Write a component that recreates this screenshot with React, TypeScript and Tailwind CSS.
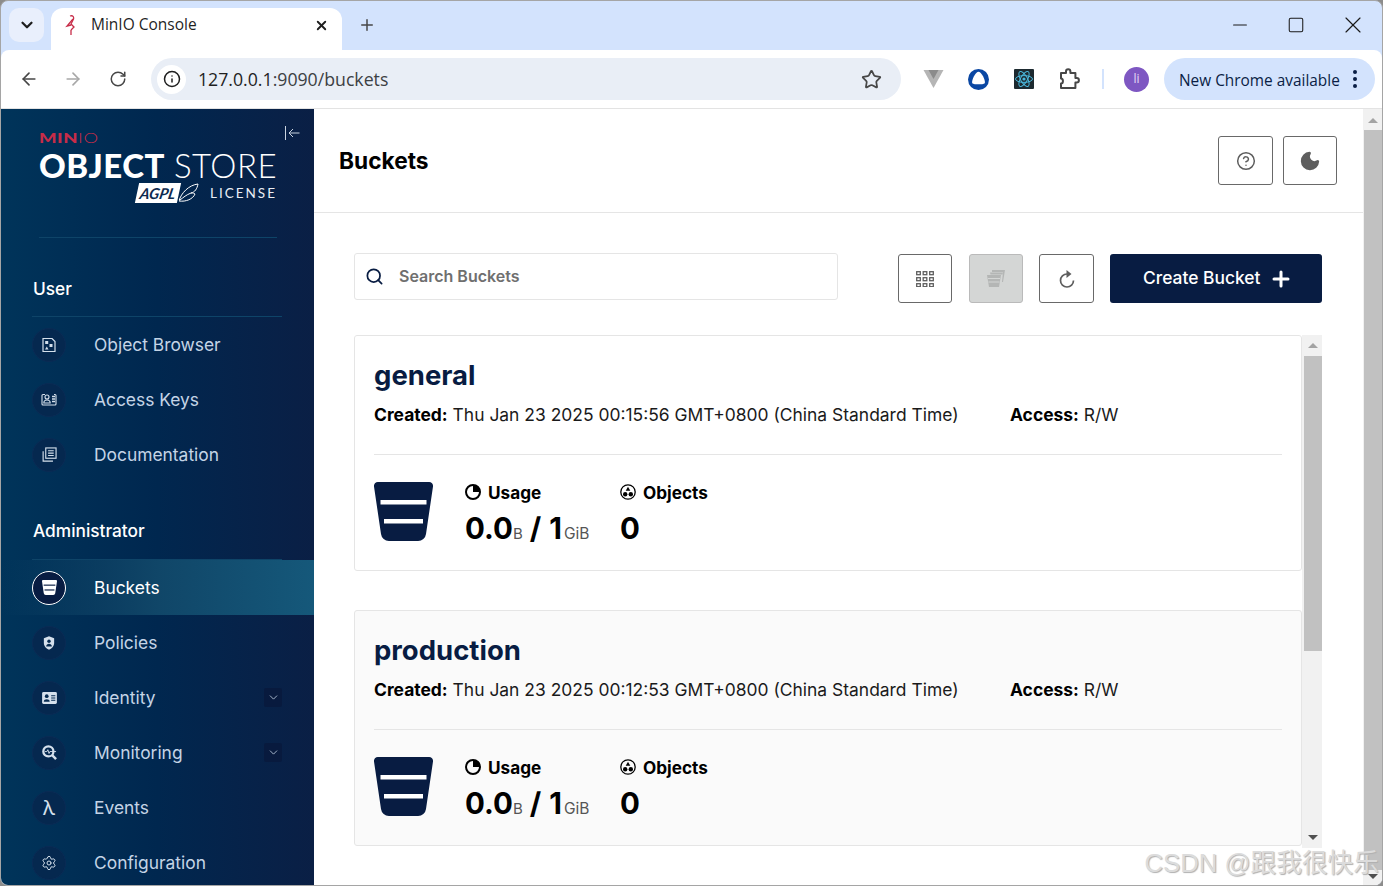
import type { ReactNode } from "react";
import {
  ArrowLeft,
  ArrowRight,
  ChevronDown,
  CircleHelp,
  Info,
  Minus,
  Moon,
  Plus,
  RotateCw,
  Search,
  Settings,
  Square,
  Star,
  X,
} from "lucide-react";

// small drawings that the icon packs don't have
function BucketIcon({ className, fill = "#081c42", line = "#fff" }: { className?: string; fill?: string; line?: string }) {
  return (
    <svg viewBox="0 0 59 59" className={className}>
      <path d="M4 0h51a4 4 0 0 1 4 4.500L52 52a8 8 0 0 1-8 7H15a8 8 0 0 1-8-7L0 4.500A4 4 0 0 1 4 0Z" fill={fill} />
      <rect x="6.500" y="18" width="46" height="4.500" fill={line} />
      <rect x="10" y="37" width="39" height="4.500" fill={line} />
    </svg>
  );
}

function PieIcon() {
  return (
    <svg viewBox="0 0 16 16" className="w-4 h-4 -mt-[3px]">
      <circle cx="8" cy="8" r="7" fill="none" stroke="#000" strokeWidth="2" />
      <path d="M8 8V1a7 7 0 0 1 7 7Z" fill="#000" />
    </svg>
  );
}

function ObjectsIcon() {
  return (
    <svg viewBox="0 0 16 16" className="w-4 h-4 -mt-[3px]">
      <circle cx="8" cy="8" r="7.200" fill="none" stroke="#000" strokeWidth="1.300" />
      <path d="M8 2.800 10.300 6.800H5.700Z" fill="#000" />
      <circle cx="5.200" cy="10.200" r="2.200" fill="#000" />
      <circle cx="10.800" cy="10.200" r="2.200" fill="#000" />
    </svg>
  );
}

function BrowserIcon() {
  return (
    <svg viewBox="0 0 14 14" className="w-[14px] h-[14px]" fill="#d5e0ec">
      <path d="M1 .5h9l3 3v10H1Z" fill="none" stroke="#d5e0ec" strokeWidth="1.200" />
      <rect x="3.200" y="3" width="3" height="3" />
      <rect x="7.500" y="6" width="3" height="3" />
      <path d="M3 11.500 4.800 8.500 6.500 11.500Z" />
    </svg>
  );
}

function KeysIcon() {
  return (
    <svg viewBox="0 0 16 14" className="w-[16px] h-[14px]" fill="none" stroke="#d5e0ec" strokeWidth="1.100">
      <path d="M4 1.500H2a1 1 0 0 0-1 1V11a1 1 0 0 0 1 1h12a1 1 0 0 0 1-1V2.500a1 1 0 0 0-1-1h-1" />
      <circle cx="6" cy="4" r="2" />
      <path d="M2.800 10c0-4 6.400-4 6.400 0Z" />
      <path d="M11 3.500h3M11 6h3M11 8.500h3" strokeWidth="1.500" />
    </svg>
  );
}

function DocsIcon() {
  return (
    <svg viewBox="0 0 16 16" className="w-[15px] h-[15px]" fill="none" stroke="#d5e0ec" strokeWidth="1.200">
      <rect x="4" y="1" width="11" height="11" />
      <path d="M6.500 4h6M6.500 6.500h6M6.500 9h6" />
      <path d="M1.200 4.500V15h10.500" />
    </svg>
  );
}

function PolicyIcon() {
  return (
    <svg viewBox="0 0 14 16" className="w-[12px] h-[14px]">
      <path d="M7 0 13 2.500V8c0 4-3 6.500-6 8-3-1.500-6-4-6-8V2.500Z" fill="#d5e0ec" />
      <circle cx="7" cy="6" r="2" fill="#05294f" />
      <path d="M3.700 12c0-4 6.600-4 6.600 0Z" fill="#05294f" />
    </svg>
  );
}

function IdentityIcon() {
  return (
    <svg viewBox="0 0 16 13" className="w-[15px] h-[12px]">
      <rect width="16" height="13" rx="1.500" fill="#d5e0ec" />
      <circle cx="5" cy="4.500" r="2" fill="#05294f" />
      <path d="M1.800 10.500c0-3.500 6.400-3.500 6.400 0Z" fill="#05294f" />
      <path d="M9.800 4h4.500M9.800 6.500h4.500M9.800 9h4.500" stroke="#05294f" strokeWidth="1.200" />
    </svg>
  );
}

function MonitorIcon() {
  return (
    <svg viewBox="0 0 16 16" className="w-[15px] h-[15px]" fill="none">
      <circle cx="6.800" cy="6.800" r="5.400" stroke="#d5e0ec" strokeWidth="2.400" />
      <path d="M3 7h2.200l1-2 1.300 4 .9-2H15" stroke="#d5e0ec" strokeWidth="1" />
      <path d="M10.800 10.800 15 15" stroke="#d5e0ec" strokeWidth="2.600" />
    </svg>
  );
}

function CollapseIcon() {
  return (
    <svg viewBox="0 0 15 14" className="w-[15px] h-[14px]" fill="none" stroke="#c9d3df" strokeWidth="1">
      <path d="M.5 0v14" />
      <path d="M14.500 7H4M8 3 4 7l4 4" />
    </svg>
  );
}

function GridIcon() {
  return (
    <svg viewBox="0 0 18 16" className="w-[18px] h-[16px]" fill="none" stroke="#5e5e5e" strokeWidth="1.300">
      {[0, 6, 12].map((y) =>
        [0, 6.500, 13].map((x) => <rect key={`${x}-${y}`} x={x + 0.7} y={y + 0.7} width="3.600" height="3" />)
      )}
    </svg>
  );
}

function MultiBucketIcon() {
  return (
    <svg viewBox="0 0 18 17" className="w-[18px] h-[17px]" fill="#b4b6b5">
      <path d="M5 0h13l-2 12h-1l1-10H5Z" />
      <path d="M3 2.500h13l-.5 2H3.500Z" />
      <path d="M0 5h14l-2 12H2Z" />
      <path d="M1 8.500h12M1.500 12h11" stroke="#d4d6d5" strokeWidth="1.200" />
    </svg>
  );
}

function RefreshIcon() {
  return (
    <svg viewBox="0 0 20 20" className="w-[20px] h-[20px]" fill="none" stroke="#5e5e5e" strokeWidth="1.700">
      <path d="M10 5a6.500 6.500 0 1 0 6.500 6.500" />
      <path d="M9.500 1 14.500 5 9.500 9Z" fill="#5e5e5e" stroke="none" />
    </svg>
  );
}

function ExtensionIcon() {
  return (
    <svg viewBox="0 0 22 22" className="w-[22px] h-[22px]" fill="none" stroke="#474747" strokeWidth="2" strokeLinejoin="round">
      <path d="M3 5h5V3.500a2.200 2.200 0 0 1 4.400 0V5h5v5h1.300a2.200 2.200 0 0 1 0 4.400h-1.300V20H3v-4.500c2.600 0 2.600-5 0-5Z" />
    </svg>
  );
}

function Flamingo() {
  return (
    <svg viewBox="0 0 12 20" className="w-[12px] h-[20px]" fill="none" stroke="#c72c48" strokeWidth="1.300">
      <path d="M5 1c3-1 4 1 3.500 3L6 9l3 3-3 3" />
      <path d="M8 4 2 11l4-1M6 15v5" />
    </svg>
  );
}

function NavRow({ icon, label, active, chevron }: { icon: ReactNode; label: string; active?: boolean; chevron?: boolean }) {
  return (
    <div
      className={`flex items-center h-[55px] pl-[31px] pr-[32px] ${
        active ? "bg-linear-to-r from-transparent via-[#104668] to-[#15587a] text-white" : "text-[#c4d4e6]"
      }`}
    >
      <div
        className={`flex items-center justify-center w-[34px] h-[34px] rounded-full border ${
          active ? "bg-[#081c42] border-white" : "bg-[#05284f] border-[#0a2b55]"
        }`}
      >
        {icon}
      </div>
      <span className="ml-[28px] flex-1 text-[17.400px] leading-6">{label}</span>
      {chevron && (
        <div className="flex items-center justify-center w-[18px] h-[19px] rounded-[2px] bg-[#081a3e]">
          <ChevronDown className="w-[13px] h-[13px] text-[#c4d4e6]" strokeWidth={1.500} />
        </div>
      )}
    </div>
  );
}

function SectionTitle({ label, className }: { label: string; className: string }) {
  return (
    <div className={`ml-[31px] mr-[32px] pl-px border-b border-[#0e4468] text-[17.300px] leading-6 font-medium text-white ${className}`}>
      {label}
    </div>
  );
}

function OutlineButton({ children, className }: { children: ReactNode; className: string }) {
  return (
    <div className={`flex items-center justify-center h-[49px] rounded-[3px] border border-[#696969] bg-white ${className}`}>
      {children}
    </div>
  );
}

function BucketCard({ name, created, className }: { name: string; created: string; className?: string }) {
  return (
    <div className={`h-[236px] shrink-0 rounded-[3px] border border-[#e5e5e5] px-[19px] pt-[21px] ${className ?? ""}`}>
      <div className="text-[27.500px] leading-[36px] font-bold text-[#081c42]">{name}</div>
      <div className="flex mt-[10px] text-[17.450px] leading-6 text-[#1a1a1a]">
        <span className="w-[636px]">
          <b className="font-bold text-black">Created:</b> {created}
        </span>
        <span>
          <b className="font-bold text-black">Access:</b> R/W
        </span>
      </div>
      <div className="mt-[27px] border-t border-[#e5e5e5]" />
      <div className="flex mt-[27px]">
        <BucketIcon className="w-[59px] h-[59px]" />
        <div className="ml-[32px] w-[155px]">
          <div className="flex items-center gap-[7px] h-[22px] text-[17.200px] font-bold text-black">
            <PieIcon />
            Usage
          </div>
          <div className="mt-[4px] h-[40px] leading-[40px] whitespace-nowrap text-[29.500px] font-bold text-black">
            0.0<span className="text-[15px] font-normal text-[#555]">B</span> / <span className="ml-px">1</span>
            <span className="ml-[2px] text-[15.500px] font-normal text-[#555]">GiB</span>
          </div>
        </div>
        <div>
          <div className="flex items-center gap-[7px] h-[22px] text-[17.200px] font-bold text-black">
            <ObjectsIcon />
            Objects
          </div>
          <div className="mt-[4px] h-[40px] leading-[40px] text-[29.500px] font-bold text-black">0</div>
        </div>
      </div>
    </div>
  );
}

function ArrowUp({ className }: { className?: string }) {
  return <div className={`w-0 h-0 border-x-[5px] border-x-transparent border-b-[5px] border-b-[#a3a3a3] ${className ?? ""}`} />;
}

function ArrowDown({ className }: { className?: string }) {
  return <div className={`w-0 h-0 border-x-[5px] border-x-transparent border-t-[5px] border-t-[#505050] ${className ?? ""}`} />;
}

export default function App() {
  return (
    <div className="relative w-[1383px] h-[886px] overflow-hidden bg-[#8c8c8c] font-['Inter',sans-serif]">
      <div className="flex flex-col w-full h-full overflow-hidden rounded-[8px] border border-[#a5a5a5] bg-[#d3e3fd]">
        {/* tab strip */}
        <div className="flex items-start h-[49px] shrink-0 pt-[7px] pl-[8px] font-['Open_Sans',sans-serif]">
          <div className="flex items-center justify-center w-[35px] h-[34px] rounded-[10px] bg-[#e9effc]">
            <ChevronDown className="w-[18px] h-[18px] text-[#1f1f1f]" strokeWidth={3} />
          </div>
          <div className="flex items-center ml-[7px] w-[291px] h-[42px] rounded-t-[12px] bg-white pl-[14px] pr-[13px] pb-[8px]">
            <Flamingo />
            <span className="ml-[14px] flex-1 text-[15.500px] text-[#1f1f1f]">MinIO Console</span>
            <X className="w-[15px] h-[15px] text-[#1f1f1f]" strokeWidth={3} />
          </div>
          <Plus className="ml-[16px] mt-[8px] w-[18px] h-[18px] text-[#474747]" strokeWidth={2} />
          <div className="flex-1" />
          <div className="flex items-center h-[34px]">
            <Minus className="w-[22px] h-[22px] text-[#1a1a1a]" strokeWidth={1.100} />
            <Square className="ml-[36px] w-[18px] h-[18px] text-[#1a1a1a]" strokeWidth={1.400} />
            <X className="ml-[34px] mr-[15px] w-[28px] h-[28px] text-[#1a1a1a]" strokeWidth={1} />
          </div>
        </div>

        {/* address bar */}
        <div className="flex items-center h-[59px] shrink-0 pl-[6px] bg-white rounded-t-[8px] border-b border-[#e3e3e3] font-['Open_Sans',sans-serif]">
          <div className="flex items-center justify-center w-[44px]">
            <ArrowLeft className="w-[20px] h-[20px] text-[#474747]" strokeWidth={2} />
          </div>
          <div className="flex items-center justify-center w-[44px]">
            <ArrowRight className="w-[20px] h-[20px] text-[#a8a8a8]" strokeWidth={2} />
          </div>
          <div className="flex items-center justify-center w-[46px]">
            <RotateCw className="w-[18px] h-[18px] text-[#474747]" strokeWidth={2} />
          </div>
          <div className="flex items-center ml-[10px] w-[750px] h-[42px] rounded-full bg-[#e9eef6] pl-[6px] pr-[19px]">
            <div className="flex items-center justify-center w-[29px] h-[29px] rounded-full bg-white">
              <Info className="w-[18px] h-[18px] text-[#1f1f1f]" strokeWidth={2} />
            </div>
            <span className="ml-[12px] flex-1 text-[17.700px] text-[#3c4043]">
              <span className="text-[#1f1f1f]">127.0.0.1</span>:9090/buckets
            </span>
            <Star className="w-[21px] h-[21px] text-[#474747]" strokeWidth={2} />
          </div>
          <div className="flex items-center justify-center ml-[10px] w-[45px]">
            <svg viewBox="0 0 20 18" className="w-[21px] h-[18px]">
              <path d="M0 0h20L10 18Z" fill="#b5b5b5" />
              <path d="M5 0h10l-5 9Z" fill="#8b8b8b" />
            </svg>
          </div>
          <div className="flex items-center justify-center w-[45px]">
            <svg viewBox="0 0 20 20" className="w-[21px] h-[21px]">
              <circle cx="10" cy="10" r="10" fill="#0a47a3" />
              <path d="M10 2.500c2.500 0 7 8 6 11-2 1.500-10 1.500-12 0-1-3 3.500-11 6-11Z" fill="#fff" />
            </svg>
          </div>
          <div className="flex items-center justify-center w-[45px]">
            <svg viewBox="0 0 20 20" className="w-[20px] h-[20px]" fill="none" stroke="#4bb8dc" strokeWidth="1">
              <rect width="20" height="20" rx="1" fill="#1d2a30" stroke="none" />
              <ellipse cx="10" cy="10" rx="8.500" ry="3.400" />
              <ellipse cx="10" cy="10" rx="8.500" ry="3.400" transform="rotate(60 10 10)" />
              <ellipse cx="10" cy="10" rx="8.500" ry="3.400" transform="rotate(120 10 10)" />
              <circle cx="10" cy="10" r="1.600" fill="#4bb8dc" stroke="none" />
            </svg>
          </div>
          <div className="flex items-center justify-center w-[45px]">
            <ExtensionIcon />
          </div>
          <div className="ml-[11px] w-[2px] h-[20px] bg-[#d3e3fd]" />
          <div className="flex items-center justify-center ml-[20px] w-[25px] h-[25px] rounded-full bg-[#7e57c2] text-[12px] text-[#e6dcf5]">
            li
          </div>
          <div className="flex items-center ml-[15px] w-[211px] h-[42px] rounded-full bg-[#d3e3fd] pl-[15px]">
            <span className="pt-[3px] text-[15.400px] text-[#0a1e45]">New Chrome available</span>
            <div className="ml-[13px] flex flex-col gap-[3px]">
              <div className="w-[4px] h-[4px] rounded-full bg-[#0a1e45]" />
              <div className="w-[4px] h-[4px] rounded-full bg-[#0a1e45]" />
              <div className="w-[4px] h-[4px] rounded-full bg-[#0a1e45]" />
            </div>
          </div>
        </div>

        {/* page */}
        <div className="flex flex-1 min-h-0 bg-white">
          <aside className="w-[313px] shrink-0 overflow-hidden bg-linear-to-r from-[#00345a] via-[#00274f] to-[#0a1f45]">
            <div className="flex h-[129px] pt-[17px] pl-[38px]">
              <div className="w-[238px] h-[112px] pt-[5px] border-b border-[#0e4468] whitespace-nowrap font-['Lato',sans-serif]">
                <div className="h-[12px] text-[14px] leading-[14px] tracking-[0.4px] text-[#c72c48] font-black [transform-origin:left] scale-x-[1.320]">
                  MIN<span className="font-light">IO</span>
                </div>
                <div className="mt-[5px] h-[34px] text-[33px] leading-[34px] tracking-[0.500px] text-white">
                  <span className="font-black">OBJECT</span> <span className="font-light">STORE</span>
                </div>
                <div className="flex items-center justify-end h-[22px]">
                  <div className="flex items-center justify-center w-[42px] h-[20px] -skew-x-12 bg-white text-[15px] leading-[15px] italic font-bold text-[#0d2a4f]">
                    AGPL
                  </div>
                  <svg viewBox="0 0 20 20" className="w-[20px] h-[20px]" fill="none" stroke="#fff" strokeWidth="1">
                    <path d="M0 18C2 10 10 2 19 1c-1 5-3 8-7 9 2 0 3 0 4 1-2 5-9 8-16 7Z" />
                    <path d="M1 17c4-3 6-5 11-7" />
                  </svg>
                  <span className="ml-[11px] text-[13.500px] tracking-[2px] text-[#e9eef4]">LICENSE</span>
                </div>
              </div>
              <div className="ml-[8px]">
                <CollapseIcon />
              </div>
            </div>

            <SectionTitle label="User" className="pt-[39px] pb-[15px]" />
            <NavRow icon={<BrowserIcon />} label="Object Browser" />
            <NavRow icon={<KeysIcon />} label="Access Keys" />
            <NavRow icon={<DocsIcon />} label="Documentation" />

            <SectionTitle label="Administrator" className="mt-[37px] pb-[16px]" />
            <NavRow icon={<BucketIcon className="w-[15px] h-[15px]" fill="#fff" line="#081c42" />} label="Buckets" active />
            <NavRow icon={<PolicyIcon />} label="Policies" />
            <NavRow icon={<IdentityIcon />} label="Identity" chevron />
            <NavRow icon={<MonitorIcon />} label="Monitoring" chevron />
            <NavRow icon={<span className="text-[20px] leading-none text-[#d5e0ec]">λ</span>} label="Events" />
            <NavRow icon={<Settings className="w-[16px] h-[16px] text-[#d5e0ec]" strokeWidth={1.500} />} label="Configuration" />
          </aside>

          <main className="flex-1 min-w-0">
            <header className="flex items-center h-[104px] border-b border-[#e5e5e5] pl-[25px] pr-[26px]">
              <h1 className="flex-1 pt-[2px] text-[22.700px] font-bold text-black">Buckets</h1>
              <OutlineButton className="w-[55px]">
                <CircleHelp className="w-[20px] h-[20px] text-[#5e5e5e]" strokeWidth={1.800} />
              </OutlineButton>
              <OutlineButton className="ml-[10px] w-[54px]">
                <Moon className="w-[22px] h-[22px] text-[#5e5e5e] fill-[#5e5e5e]" />
              </OutlineButton>
            </header>

            <div className="pt-[40px] pl-[40px] pr-[41px]">
              <div className="flex items-start">
                <div className="flex items-center w-[484px] h-[47px] rounded-[3px] border border-[#e5e5e5] pl-[10px]">
                  <Search className="w-[19px] h-[19px] text-[#081c42]" strokeWidth={2.200} />
                  <span className="ml-[15px] pb-[2px] text-[16px] font-semibold text-[#6f6f6f]">Search Buckets</span>
                </div>
                <OutlineButton className="ml-[60px] mt-px w-[54px]">
                  <GridIcon />
                </OutlineButton>
                <div className="flex items-center justify-center ml-[17px] mt-px w-[54px] h-[49px] rounded-[3px] border border-[#bababa] bg-[#d4d6d5]">
                  <MultiBucketIcon />
                </div>
                <OutlineButton className="ml-[16px] mt-px w-[55px]">
                  <RefreshIcon />
                </OutlineButton>
                <div className="flex items-center gap-[9px] ml-[16px] mt-px pl-[33px] w-[212px] h-[49px] rounded-[3px] bg-[#081c42] text-[17.400px] font-medium text-white">
                  Create Bucket
                  <Plus className="w-[24px] h-[24px]" strokeWidth={3} />
                </div>
              </div>

              <div className="flex mt-[32px] h-[513px]">
                <div className="flex flex-col gap-[39px] w-[948px] overflow-hidden">
                  <BucketCard name="general" created="Thu Jan 23 2025 00:15:56 GMT+0800 (China Standard Time)" />
                  <BucketCard
                    name="production"
                    created="Thu Jan 23 2025 00:12:53 GMT+0800 (China Standard Time)"
                    className="bg-[#fafafa]"
                  />
                </div>
                <div className="flex flex-col items-end w-[20px] bg-[#f1f1f1]">
                  <div className="flex justify-center w-[18px] h-[21px] pt-[8px]">
                    <ArrowUp />
                  </div>
                  <div className="w-[18px] h-[295px] bg-[#c1c1c1]" />
                  <div className="flex-1" />
                  <div className="flex justify-center w-[18px] h-[13px]">
                    <ArrowDown />
                  </div>
                </div>
              </div>
            </div>
          </main>

          <div className="flex flex-col items-center w-[19px] shrink-0 bg-[#f1f1f1]">
            <div className="flex justify-center h-[21px] pt-[9px]">
              <ArrowUp />
            </div>
            <div className="w-[18px] h-[740px] bg-[#c1c1c1]" />
            <div className="flex justify-center pt-[4px]">
              <ArrowDown />
            </div>
          </div>
        </div>
      </div>

      <div className="absolute right-[4px] bottom-[6px] text-[25.700px] leading-[34px] text-[#dcdcdc] [text-shadow:1px_1px_1px_#b0b0b0] font-['Liberation_Sans','Noto_Sans_CJK_SC',sans-serif]">
        CSDN @跟我很快乐
      </div>
    </div>
  );
}
